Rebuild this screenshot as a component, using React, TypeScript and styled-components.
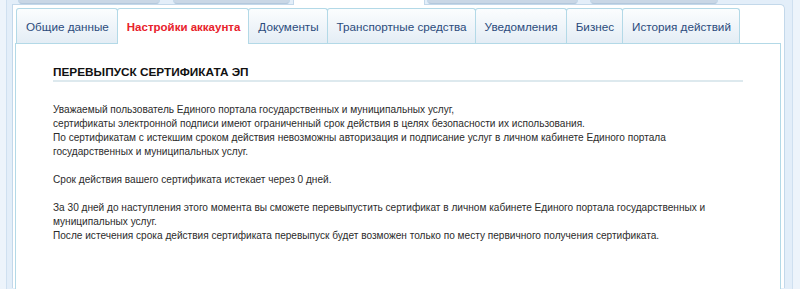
import React from 'react'
import styled, { createGlobalStyle } from 'styled-components'

const colors = {
  page: '#edf4fb',
  frame: '#e3eef9',
  frameBorder: '#cfe0f0',
  panelBorder: '#c3d8ea',
  tabBorder: '#b3d9e7',
  tabText: '#2b4b7c',
  active: '#e8222b',
  text: '#2b2b2b'
}

const GlobalStyle = createGlobalStyle`
  html, body {
    margin: 0;
    padding: 0;
    background: ${colors.page};
    overflow: hidden;
  }
  body {
    font-family: 'Liberation Sans', Arial, sans-serif;
  }
`

const Frame = styled.div`
  margin: 0 7px 0 6px;
  height: 289px;
  border-left: 1px solid ${colors.frameBorder};
  border-right: 1px solid ${colors.frameBorder};
  background: ${colors.frame};
  padding: 0 7px 0 5px;
`

const ParentTabs = styled.div`
  display: flex;
  align-items: flex-start;
  height: 4px;
`

const ParentTab = styled.div<{ $width: number; $gap: number; $active?: boolean }>`
  flex: none;
  width: ${p => p.$width}px;
  margin-left: ${p => p.$gap}px;
  box-sizing: border-box;
  height: ${p => (p.$active ? 5 : 4)}px;
  border: 1px solid ${colors.panelBorder};
  border-top: none;
  border-bottom: ${p => (p.$active ? 'none' : `1px solid #b4c8dc`)};
  border-radius: ${p => (p.$active ? '0' : '0 0 4px 4px')};
  background: ${p => (p.$active ? '#fff' : '#c9d7e6')};
  position: relative;
  z-index: 1;
`

const Panel = styled.div`
  background: #fff;
  border: 1px solid ${colors.panelBorder};
  border-bottom: none;
  border-top-right-radius: 5px;
  padding: 3px 3px 0 2px;
  height: 284px;
  box-sizing: border-box;
`

const TabRow = styled.div`
  display: flex;
  margin-left: 1px;
  height: 35px;
`

const Tab = styled.div<{ $active?: boolean }>`
  flex: none;
  box-sizing: border-box;
  height: ${p => (p.$active ? 36 : 35)}px;
  margin-right: -1px;
  padding: 1px 8px 0 9px;
  border: 1px solid ${colors.tabBorder};
  border-bottom: none;
  border-radius: 3px 3px 0 0;
  display: flex;
  align-items: center;
  font-size: ${p => (p.$active ? 11.5 : 11.7)}px;
  font-weight: ${p => (p.$active ? 'bold' : 'normal')};
  color: ${p => (p.$active ? colors.active : colors.tabText)};
  background: ${p =>
    p.$active ? '#fff' : 'linear-gradient(#fbfdfe, #e4edf5)'};
  position: relative;
  z-index: ${p => (p.$active ? 1 : 0)};
  white-space: nowrap;
`

const Content = styled.div`
  border: 1px solid ${colors.tabBorder};
  border-bottom: none;
  background: #fff;
  padding: 21px 37px 0 37px;
  height: 260px;
  box-sizing: border-box;
`

const Heading = styled.h2`
  margin: 0;
  font-size: 11.8px;
  line-height: 14px;
  font-weight: bold;
  color: #111;
  padding-bottom: 1px;
  border-bottom: 2px solid #dde9ee;
`

const Text = styled.p`
  margin: 21px 0 0 0;
  font-size: 10.1px;
  line-height: 14px;
  color: ${colors.text};
`

const parentTabs = [
  { width: 142, gap: 6 },
  { width: 117, gap: 13 },
  { width: 132, gap: 3, active: true },
  { width: 151, gap: 2 },
  { width: 128, gap: 12 }
]

const tabs = [
  'Общие данные',
  'Настройки аккаунта',
  'Документы',
  'Транспортные средства',
  'Уведомления',
  'Бизнес',
  'История действий'
]

const App: React.FC = () => {
  return (
    <>
      <GlobalStyle />
      <Frame>
        <ParentTabs>
          {parentTabs.map((t, i) => (
            <ParentTab key={i} $width={t.width} $gap={t.gap} $active={t.active} />
          ))}
        </ParentTabs>
        <Panel>
          <TabRow>
            {tabs.map((t, i) => (
              <Tab key={t} $active={i === 1}>
                {t}
              </Tab>
            ))}
          </TabRow>
          <Content>
            <Heading>ПЕРЕВЫПУСК СЕРТИФИКАТА ЭП</Heading>
            <Text>
              Уважаемый пользователь Единого портала государственных и
              муниципальных услуг,
              <br />
              сертификаты электронной подписи имеют ограниченный срок действия в
              целях безопасности их использования.
              <br />
              По сертификатам с истекшим сроком действия невозможны авторизация
              и подписание услуг в личном кабинете Единого портала
              государственных и муниципальных услуг.
              <br />
              <br />
              Срок действия вашего сертификата истекает через 0 дней.
              <br />
              <br />
              За 30 дней до наступления этого момента вы сможете перевыпустить
              сертификат в личном кабинете Единого портала государственных и
              муниципальных услуг.
              <br />
              После истечения срока действия сертификата перевыпуск будет
              возможен только по месту первичного получения сертификата.
            </Text>
          </Content>
        </Panel>
      </Frame>
    </>
  )
}

export default App
